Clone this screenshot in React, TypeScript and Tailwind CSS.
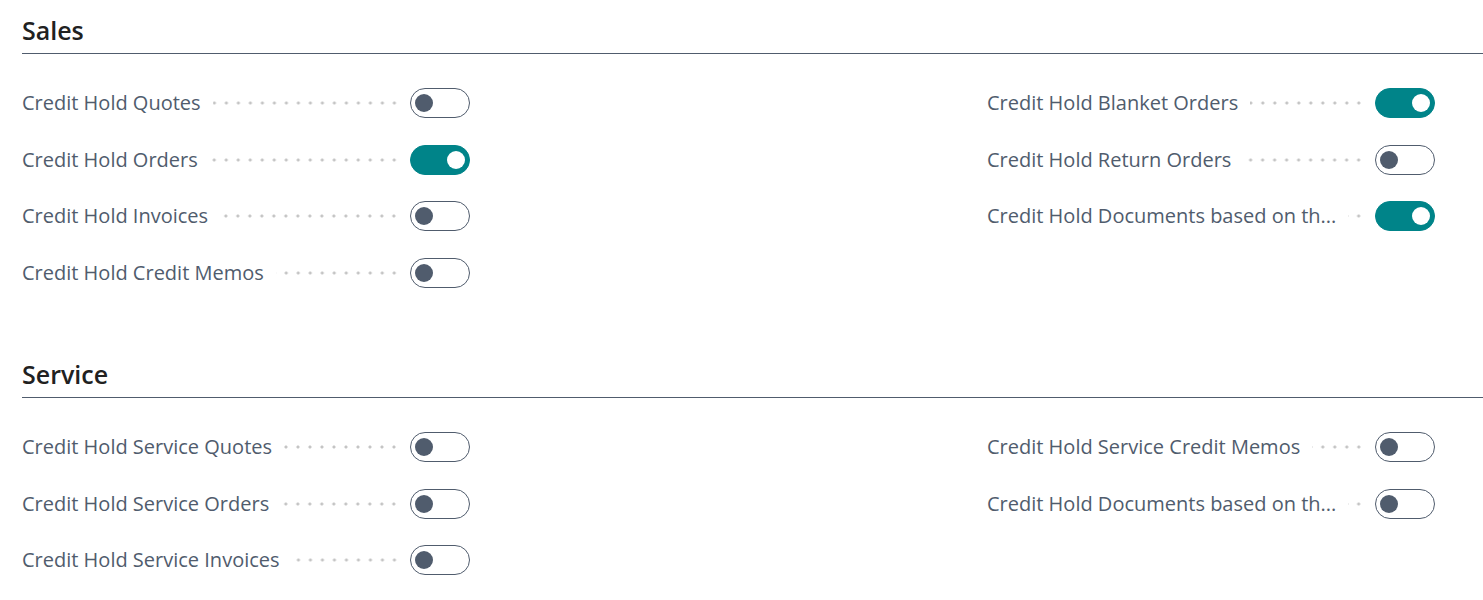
import { useState } from 'react';

type Field = { id: string; label: string; on: boolean };

const sections: { title: string; left: Field[]; right: Field[] }[] = [
    {
        title: 'Sales',
        left: [
            { id: 'quotes', label: 'Credit Hold Quotes', on: false },
            { id: 'orders', label: 'Credit Hold Orders', on: true },
            { id: 'invoices', label: 'Credit Hold Invoices', on: false },
            { id: 'creditMemos', label: 'Credit Hold Credit Memos', on: false },
        ],
        right: [
            { id: 'blanket', label: 'Credit Hold Blanket Orders', on: true },
            { id: 'returns', label: 'Credit Hold Return Orders', on: false },
            { id: 'docsSales', label: 'Credit Hold Documents based on th...', on: true },
        ],
    },
    {
        title: 'Service',
        left: [
            { id: 'svcQuotes', label: 'Credit Hold Service Quotes', on: false },
            { id: 'svcOrders', label: 'Credit Hold Service Orders', on: false },
            { id: 'svcInvoices', label: 'Credit Hold Service Invoices', on: false },
        ],
        right: [
            { id: 'svcCreditMemos', label: 'Credit Hold Service Credit Memos', on: false },
            { id: 'docsService', label: 'Credit Hold Documents based on th...', on: false },
        ],
    },
];

function Toggle({ on, onClick }: { on: boolean; onClick: () => void }) {
    return (
        <button
            type="button"
            onClick={onClick}
            className={`w-[60px] h-[30px] shrink-0 rounded-full border flex items-center px-[4px] ${
                on ? 'bg-[#008489] border-[#008489] justify-end' : 'bg-white border-[#505c6d] justify-start'
            }`}
        >
            <span className={`w-[18px] h-[18px] rounded-full ${on ? 'bg-white' : 'bg-[#505c6d]'}`} />
        </button>
    );
}

function Row({ field, on, onToggle }: { field: Field; on: boolean; onToggle: () => void }) {
    return (
        <div className="h-[56.67px] w-[448px] flex items-center">
            <div className="w-[378px] flex items-center min-w-0">
                <span className="whitespace-nowrap text-[20px] leading-6 text-[#505c6d]">{field.label}</span>
                <span className="flex-1 min-w-[12px] ml-3 h-[4px] bg-[radial-gradient(circle,#c4c4c4_1.3px,transparent_1.8px)] bg-[length:12px_4px] bg-repeat-x bg-right" />
            </div>
            <div className="ml-[10px]">
                <Toggle on={on} onClick={onToggle} />
            </div>
        </div>
    );
}

export default function App() {
    const [values, setValues] = useState<Record<string, boolean>>(() => {
        const init: Record<string, boolean> = {};
        sections.forEach((s) => [...s.left, ...s.right].forEach((f) => (init[f.id] = f.on)));
        return init;
    });

    const flip = (id: string) => setValues((prev) => ({ ...prev, [id]: !prev[id] }));

    return (
        <div className="min-h-screen bg-white pl-[22px] font-['Segoe_UI','Open_Sans',sans-serif]">
            {sections.map((section, i) => (
                <section key={section.title} className={i > 0 ? 'mt-[42.67px]' : ''}>
                    <h2 className="pt-[14px] pb-[7px] text-[25px] leading-[32px] font-semibold text-[#212121] border-b border-[#505c6d]">
                        {section.title}
                    </h2>
                    <div className="mt-[20.67px] grid grid-cols-[965px_448px] items-start">
                        <div className="flex flex-col">
                            {section.left.map((f) => (
                                <Row key={f.id} field={f} on={values[f.id]} onToggle={() => flip(f.id)} />
                            ))}
                        </div>
                        <div className="flex flex-col">
                            {section.right.map((f) => (
                                <Row key={f.id} field={f} on={values[f.id]} onToggle={() => flip(f.id)} />
                            ))}
                        </div>
                    </div>
                </section>
            ))}
        </div>
    );
}
